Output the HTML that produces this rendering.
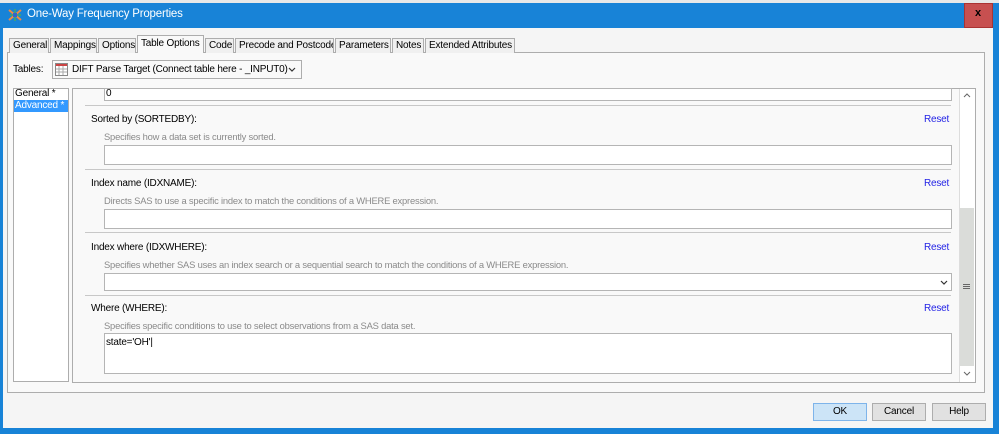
<!DOCTYPE html>
<html><head><style>
*{margin:0;padding:0;box-sizing:border-box}
body{width:999px;height:434px;position:relative;overflow:hidden;background:#f0f0f0;font-family:"Liberation Sans",sans-serif;font-size:10px;letter-spacing:-0.2px;color:#000}
.a{position:absolute}
.t{position:absolute;white-space:nowrap}
.tab{position:absolute;top:38px;height:15px;border:1px solid #adadad;border-bottom:none;background:#f0f0f0;font-size:10px;line-height:13px;padding-left:3px;white-space:nowrap;overflow:hidden}
.inp{position:absolute;left:104px;width:848px;background:#fff;border:1px solid #b5b5b5}
.sep{position:absolute;left:85px;width:866px;height:1px;background:#c8c8c8}
.lbl{position:absolute;left:91px;font-size:10px;white-space:nowrap}
.desc{position:absolute;left:104px;color:#8a8a8a;font-size:9.4px;white-space:nowrap}
.rs{position:absolute;left:924px;color:#2323e6;font-size:10px}
.btn{position:absolute;top:403px;height:18px;width:54px;border:1px solid #adadad;background:#e1e1e1;text-align:center;line-height:16px;font-size:10px}
</style></head><body>
<div class="a" style="left:0;top:0;width:999px;height:3px;background:#e8e8e8"></div>
<div class="a" style="left:0;top:3px;width:999px;height:431px;background:#1883d7"></div>
<div class="a" style="left:3px;top:28px;width:990px;height:400px;background:#f5f5f5"></div>
<svg class="a" style="left:8px;top:8px" width="15" height="14"><path d="M1 2l12 10M13 2L1 12" stroke="#e84" stroke-width="2"/><path d="M2 7h11M7 1v12" stroke="#4a6" stroke-width="1.5"/><rect x="5" y="5" width="4" height="4" fill="#36c"/></svg>
<div class="t" style="left:27px;top:8px;color:#fff;font-size:11.5px">One-Way Frequency Properties</div>
<div class="a" style="left:964px;top:3px;width:29px;height:25px;background:#c75050;border:1px solid #a33"></div>
<div class="t" style="left:975px;top:7px;color:#000;font-size:11px;font-weight:bold">x</div>
<div class="a" style="left:7px;top:52px;width:978px;height:341px;border:1px solid #adadad;background:#f9f9f9"></div>
<div class="tab" style="left:9px;width:40px">General</div>
<div class="tab" style="left:50px;width:47px">Mappings</div>
<div class="tab" style="left:98px;width:38px">Options</div>
<div class="tab" style="left:137px;width:67px;top:35px;height:18px;background:#f9f9f9;line-height:15px">Table Options</div>
<div class="tab" style="left:205px;width:29px">Code</div>
<div class="tab" style="left:235px;width:99px">Precode and Postcode</div>
<div class="tab" style="left:335px;width:56px">Parameters</div>
<div class="tab" style="left:392px;width:32px">Notes</div>
<div class="tab" style="left:425px;width:90px">Extended Attributes</div>
<div class="t" style="left:13px;top:64px">Tables:</div>
<div class="a" style="left:52px;top:60px;width:250px;height:19px;border:1px solid #adadad;background:#f9f9f9"></div>
<svg class="a" style="left:55px;top:63px" width="13" height="13"><rect x="0.5" y="0.5" width="12" height="12" fill="#fff" stroke="#888"/><rect x="1" y="1" width="11" height="2" fill="#c44"/><path d="M1 6h11M1 9h11M4 3v9M8 3v9" stroke="#aaa"/></svg>
<div class="t" style="left:72px;top:64px">DIFT Parse Target (Connect table here - _INPUT0)</div>
<svg class="a" style="left:288px;top:67px" width="8" height="5"><path d="M1 1l3 3 3-3" stroke="#333" fill="none" stroke-width="1.2"/></svg>
<div class="a" style="left:13px;top:88px;width:56px;height:294px;background:#fff;border:1px solid #adadad"></div>
<div class="t" style="left:15px;top:88px">General *</div>
<div class="a" style="left:14px;top:100px;width:54px;height:12px;background:#3399ff"></div>
<div class="t" style="left:15px;top:100px;color:#fff">Advanced *</div>
<div class="a" style="left:72px;top:88px;width:904px;height:295px;background:#f9f9f9;border:1px solid #adadad"></div>
<div class="inp" style="top:88px;height:13px"></div>
<div class="t" style="left:106px;top:88px">0</div>
<div class="sep" style="top:105px"></div>
<div class="lbl" style="top:114px">Sorted by (SORTEDBY):</div><div class="rs" style="top:114px">Reset</div>
<div class="desc" style="top:131px">Specifies how a data set is currently sorted.</div>
<div class="inp" style="top:145px;height:20px"></div>
<div class="sep" style="top:169px"></div>
<div class="lbl" style="top:178px">Index name (IDXNAME):</div><div class="rs" style="top:178px">Reset</div>
<div class="desc" style="top:195px">Directs SAS to use a specific index to match the conditions of a WHERE expression.</div>
<div class="inp" style="top:209px;height:20px"></div>
<div class="sep" style="top:232px"></div>
<div class="lbl" style="top:242px">Index where (IDXWHERE):</div><div class="rs" style="top:242px">Reset</div>
<div class="desc" style="top:259px">Specifies whether SAS uses an index search or a sequential search to match the conditions of a WHERE expression.</div>
<div class="inp" style="top:273px;height:18px"></div>
<svg class="a" style="left:940px;top:280px" width="8" height="5"><path d="M1 1l3 3 3-3" stroke="#333" fill="none" stroke-width="1.2"/></svg>
<div class="sep" style="top:295px"></div>
<div class="lbl" style="top:303px">Where (WHERE):</div><div class="rs" style="top:303px">Reset</div>
<div class="desc" style="top:320px">Specifies specific conditions to use to select observations from a SAS data set.</div>
<div class="inp" style="top:333px;height:41px"></div>
<div class="t" style="left:106px;top:337px">state='OH'|</div>
<div class="a" style="left:959px;top:89px;width:16px;height:293px;background:#fff;border-left:1px solid #ddd"></div>
<div class="a" style="left:960px;top:208px;width:14px;height:158px;background:#dadcd9"></div>
<svg class="a" style="left:963px;top:93px" width="8" height="5"><path d="M1 4l3-3 3 3" stroke="#666" fill="none"/></svg>
<svg class="a" style="left:963px;top:371px" width="8" height="5"><path d="M1 1l3 3 3-3" stroke="#666" fill="none"/></svg>
<div class="a" style="left:963px;top:284px;width:7px;height:1px;background:#666;box-shadow:0 2px #666,0 4px #666"></div>
<div class="btn" style="left:813px;background:#cce4f7;border-color:#7eb4ea">OK</div>
<div class="btn" style="left:872px">Cancel</div>
<div class="btn" style="left:932px">Help</div>
</body></html>
